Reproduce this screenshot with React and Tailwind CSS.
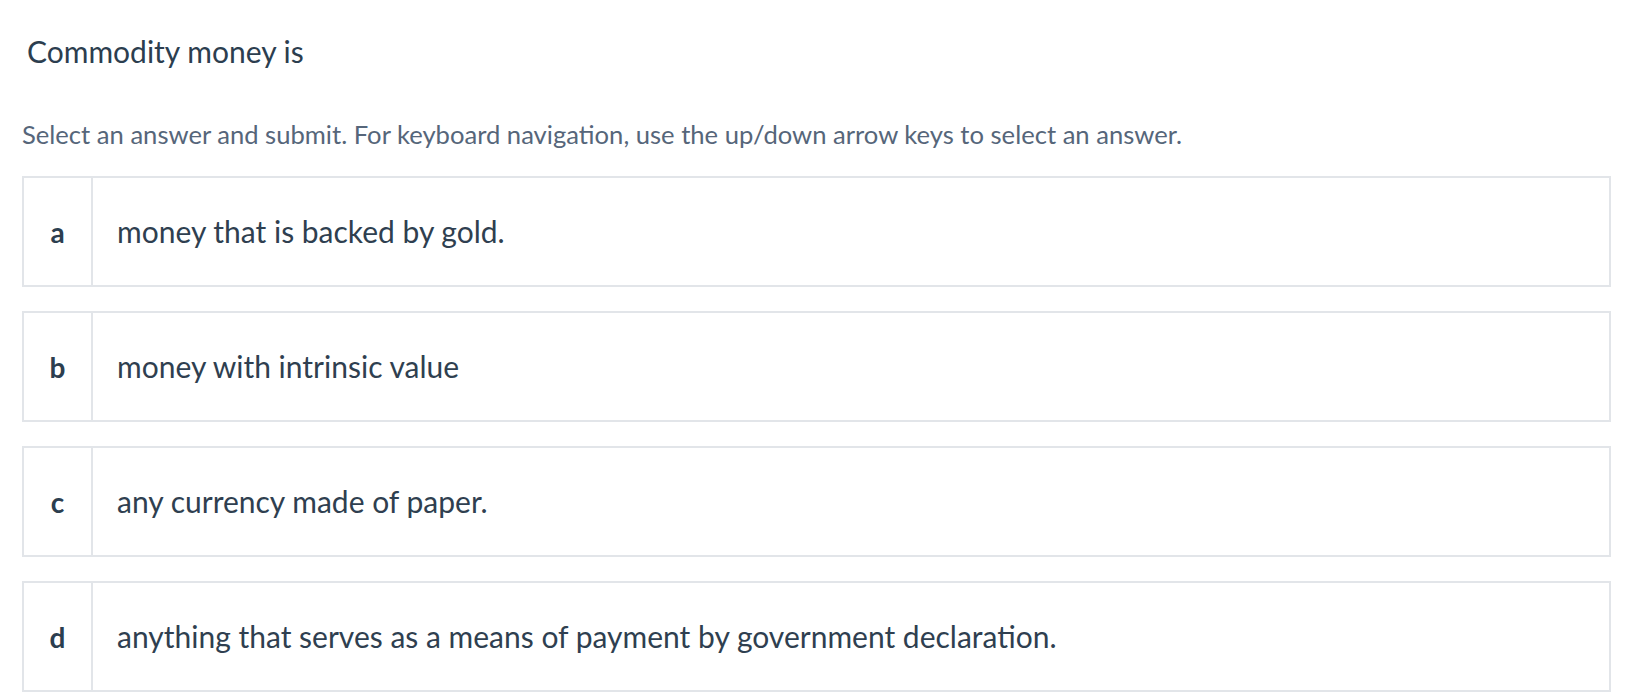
const answers = [
  { key: "a", text: "money that is backed by gold." },
  { key: "b", text: "money with intrinsic value" },
  { key: "c", text: "any currency made of paper." },
  { key: "d", text: "anything that serves as a means of payment by government declaration." },
];

const App = () => {
  return (
    <div className="min-h-screen bg-white pl-[22px] pr-[33px] font-['Lato',_'Liberation_Sans',_sans-serif]">
      <h1 className="pl-[5px] pt-[33px] text-[30px] leading-[36px] text-[#2c3e4f]">Commodity money is</h1>

      <p className="mt-[50px] text-[25.6px] leading-[30px] text-[#56667a]">
        Select an answer and submit. For keyboard navigation, use the up/down arrow keys to select an answer.
      </p>

      <div className="mt-[27px] flex flex-col gap-[24px]">
        {answers.map((a) => (
          <div key={a.key} className="flex h-[111px] border-2 border-[#e2e5e9] bg-white">
            <div className="flex w-[69px] items-center justify-center border-r-2 border-[#e2e5e9] text-[28px] font-bold text-[#2c3e4f]">
              {a.key}
            </div>
            <div className="flex flex-1 items-center pl-[24px] text-[30px] text-[#2f3f50]">{a.text}</div>
          </div>
        ))}
      </div>
    </div>
  );
};

export default App;
